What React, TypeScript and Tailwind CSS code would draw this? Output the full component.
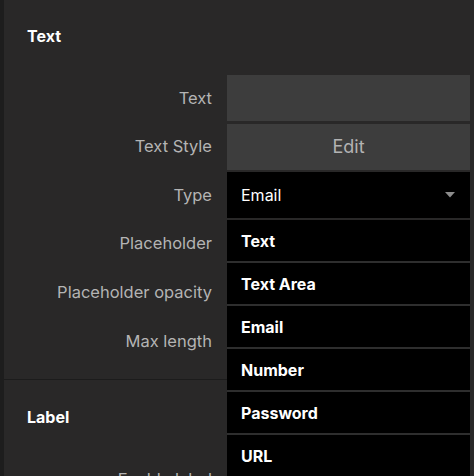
import React from 'react';

const font = { fontFamily: 'Inter, "Liberation Sans", sans-serif' };

const options = ['Text', 'Text Area', 'Email', 'Number', 'Password', 'URL'];

const Row = ({ label, children }: { label: string; children?: React.ReactNode }) => (
  <div className="flex h-[46px] items-center">
    <div className="w-[223px] shrink-0 pr-[15px] text-right text-[16.5px] text-[#b4b4b4]">{label}</div>
    <div className="relative h-full flex-1">{children}</div>
  </div>
);

export default function App() {
  return (
    <div className="flex h-[476px] w-[474px] overflow-hidden bg-[#1d1d1d]" style={font}>
      <div className="w-[4px] shrink-0 bg-[#1d1d1d]" />
      <main className="flex-1 bg-[#292828] pr-[4px]">
        {/* Text section */}
        <section className="border-b border-[#1c1c1c] pt-[26px] pb-[15px]">
          <h2 className="h-[20px] pl-[23px] text-[16px] leading-[20px] font-bold text-white">Text</h2>
          <div className="mt-[29px] flex flex-col gap-[2.6px]">
            <Row label="Text">
              <div className="h-full w-full bg-[#3d3d3d]" />
            </Row>
            <Row label="Text Style">
              <div className="flex h-full w-full items-center justify-center bg-[#3d3d3d] text-[18px] text-[#b3b3b3]">
                Edit
              </div>
            </Row>
            <Row label="Type">
              <div className="flex h-full w-full items-center justify-between bg-black pl-[14px] pr-[15px] text-[16px] text-white">
                <span>Email</span>
                <svg width="10" height="6" viewBox="0 0 10 6">
                  <path d="M0 0h10L5 5.5z" fill="#8c8c8c" />
                </svg>
              </div>
              {/* open dropdown */}
              <ul className="absolute left-0 right-0 top-full z-10 mt-[2px] flex flex-col gap-[2px] bg-[#2e2e2e]">
                {options.map((o) => (
                  <li key={o} className="flex h-[41px] items-center bg-black pl-[14px] text-[16px] font-bold text-white">
                    {o}
                  </li>
                ))}
              </ul>
            </Row>
            <Row label="Placeholder" />
            <Row label="Placeholder opacity" />
            <Row label="Max length" />
          </div>
        </section>

        {/* Label section */}
        <section className="pt-[27px]">
          <h2 className="h-[20px] pl-[23px] text-[16px] leading-[20px] font-bold text-white">Label</h2>
          <div className="mt-[29px] flex flex-col gap-[2.6px]">
            <Row label="Enable label" />
          </div>
        </section>
      </main>
    </div>
  );
}
